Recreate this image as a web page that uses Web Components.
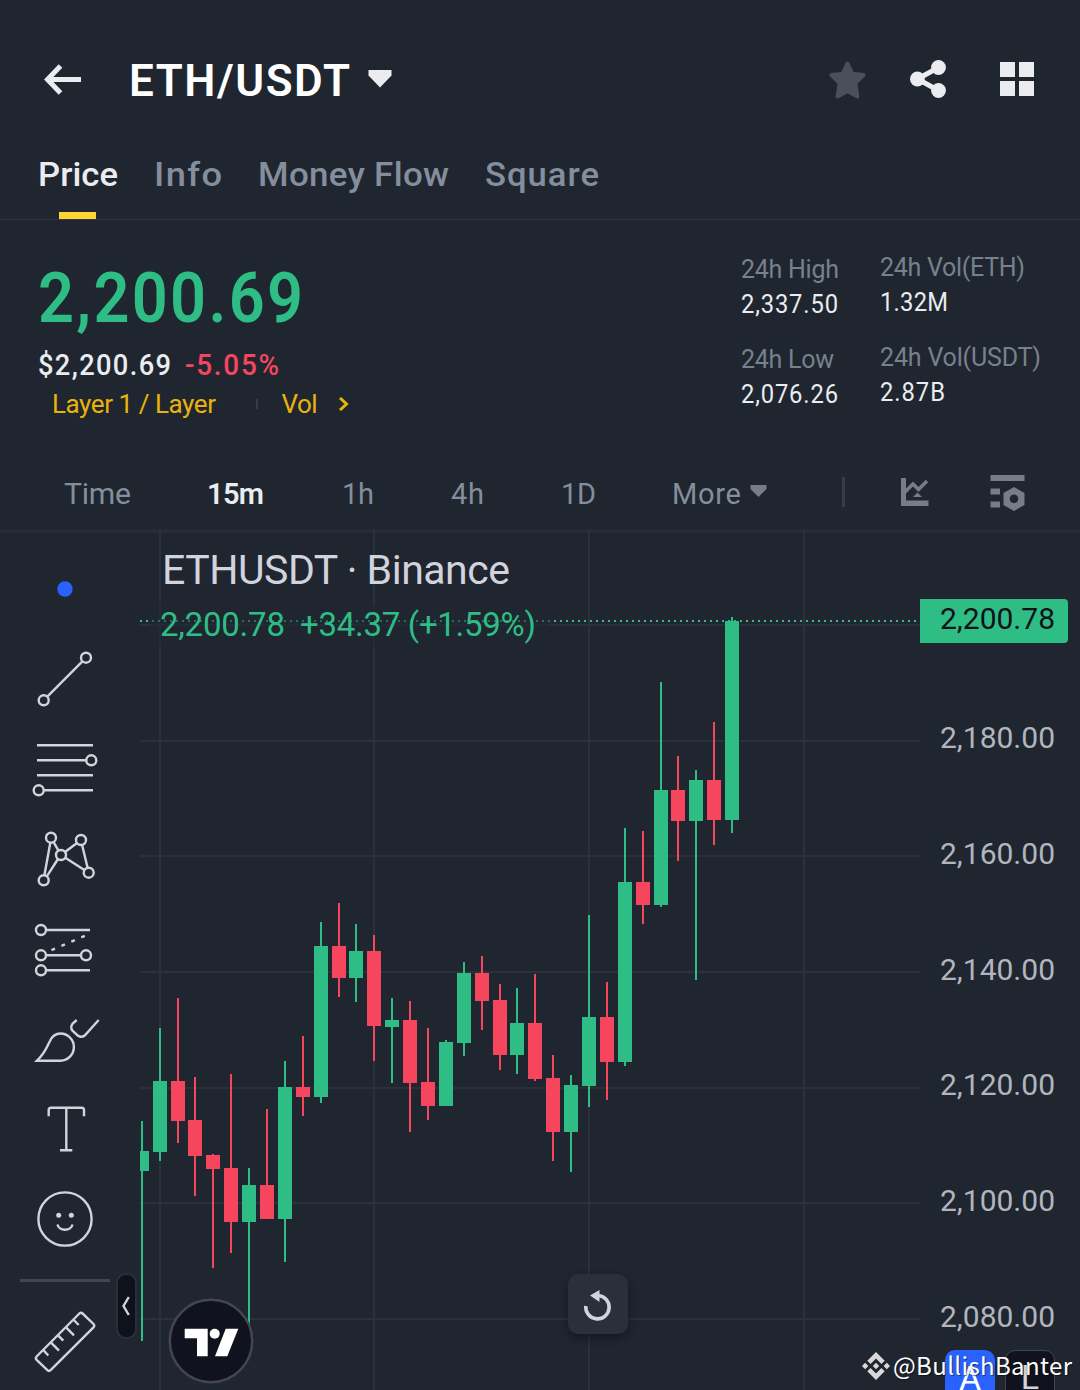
<!DOCTYPE html>
<html lang="en">
<head>
<meta charset="utf-8">
<title>ETH/USDT</title>
<style>
	html, body {
		margin: 0;
		padding: 0;
		background: #202630;
	}
	body {
		width: 1080px;
		height: 1390px;
		overflow: hidden;
		font-family: Roboto, "Liberation Sans", sans-serif;
		color: #eaecef;
	}
</style>
</head>
<body>

<trade-screen></trade-screen>

<template id="trade-screen">
	<style>
		:host {
			display: flex;
			flex-direction: column;
			position: relative;
			width: 1080px;
			height: 1390px;
			overflow: hidden;
		}
	</style>
	<pair-header></pair-header>
	<page-tabs></page-tabs>
	<price-summary></price-summary>
	<interval-bar></interval-bar>
	<chart-panel></chart-panel>
	<user-watermark>@BullishBanter</user-watermark>
</template>

<template id="pair-header">
	<style>
		:host {
			display: flex;
			align-items: center;
			height: 160px;
			box-sizing: border-box;
			padding: 0 46px 2px 44px;
		}
		.title {
			margin: 4px 0 0 48px;
			font-size: 44px;
			font-weight: 600;
			line-height: 60px;
			color: #fff;
		}
		.caret {
			margin: -1px auto 0 18px;
		}
		.star { margin: 2px 44px 0 0; }
		.share { margin-right: 54px; }
		svg { display: block; }
	</style>
	<svg width="37" height="31" viewBox="0 0 37 31" fill="none" stroke="#eaecef" stroke-width="5"><path d="M3 15.500H37M16.500 2L3.500 15.500l13 13.500"/></svg>
	<text-run class="title" width="221">ETH/USDT</text-run>
	<svg class="caret" width="24" height="18" viewBox="0 0 24 18" fill="#eaecef"><path d="M.5 0h23v5.500L12 17.500.5 5.500z"/></svg>
	<svg class="star" width="37" height="38" viewBox="0 0 37 38" fill="#4a4f5a" stroke="#4a4f5a" stroke-width="4" stroke-linejoin="round"><path d="M18.500 2.500l4.700 10.200 11.300 1.300-8.100 8 2 13.500-9.900-5.600-9.900 5.600 2-13.500-8.100-8 11.300-1.300z"/></svg>
	<svg class="share" width="36" height="38" viewBox="0 0 36 38" fill="#eaecef"><path d="M28.500 7.500L7.500 19l21 11.500" fill="none" stroke="#eaecef" stroke-width="5"/><circle cx="7.400" cy="19" r="7.400"/><circle cx="28.500" cy="7.500" r="7.400"/><circle cx="28.500" cy="30.500" r="7.400"/></svg>
	<svg width="34" height="34" viewBox="0 0 34 34" fill="#eaecef"><path d="M0 0h15v15H0zM19 0h15v15H19zM0 19h15v15H0zM19 19h15v15H19z"/></svg>
</template>

<template id="page-tabs">
	<style>
		:host {
			display: flex;
			gap: 36px;
			height: 60px;
			box-sizing: border-box;
			padding-left: 38px;
			border-bottom: 1px solid #323842;
			font-size: 33px;
			font-weight: 500;
			line-height: 29px;
			color: #848e9c;
		}
		.tab {
			display: flex;
			flex-direction: column;
			align-items: center;
			justify-content: space-between;
		}
		.active { color: #eaecef; }
		.active::after {
			content: '';
			width: 37px;
			height: 7.500px;
			background: #fcd535;
		}
	</style>
	<div class="tab active"><text-run width="80" stretch="1.05">Price</text-run></div>
	<div class="tab"><text-run width="68" stretch="1.1">Info</text-run></div>
	<div class="tab"><text-run width="191" stretch="1.06">Money Flow</text-run></div>
	<div class="tab"><text-run width="114" stretch="1.05">Square</text-run></div>
</template>

<template id="price-summary">
	<style>
		:host {
			display: flex;
			justify-content: space-between;
			height: 237px;
			box-sizing: border-box;
			padding: 32px 37px 0 38px;
		}
		.last {
			font-size: 70px;
			font-weight: 600;
			line-height: 92px;
			color: #2ebd85;
		}
		.fiat {
			display: flex;
			gap: 14px;
			margin-top: -1px;
			font-size: 29px;
			font-weight: 500;
			line-height: 44px;
		}
		.down { color: #f6465d; }
		.tags {
			display: flex;
			align-items: center;
			margin-top: -1px;
			padding-left: 14px;
			font-size: 26px;
			line-height: 36px;
			color: #e9b30c;
		}
		.tags i {
			width: 2.500px;
			height: 10px;
			margin: 0 23px 0 40px;
			background: #363c48;
		}
		.tags svg { margin-left: 22px; }
		.stats {
			display: grid;
			grid-template-columns: 139px 163px;
			grid-auto-rows: 90px;
		}
		stat-cell:nth-child(even) { margin-top: -2px; }
	</style>
	<div>
		<text-run class="last" width="265" stretch=".9">2,200.69</text-run>
		<div class="fiat">
			<text-run width="133" stretch=".94">$2,200.69</text-run>
			<text-run class="down" width="94" stretch=".96">-5.05%</text-run>
		</div>
		<div class="tags">
			<text-run width="164">Layer 1 / Layer</text-run>
			<i></i>
			<text-run width="36">Vol</text-run>
			<svg width="10" height="14" viewBox="0 0 10 14" fill="none" stroke="#e9b30c" stroke-width="3"><path d="M1 1l6.500 6L1 13"/></svg>
		</div>
	</div>
	<div class="stats">
		<stat-cell label="24h High" lw="98" vw="97">2,337.50</stat-cell>
		<stat-cell label="24h Vol(ETH)" lw="145" vw="68">1.32M</stat-cell>
		<stat-cell label="24h Low" lw="93" vw="97">2,076.26</stat-cell>
		<stat-cell label="24h Vol(USDT)" lw="161" vw="65">2.87B</stat-cell>
	</div>
</template>

<template id="interval-bar">
	<style>
		:host {
			display: flex;
			align-items: center;
			height: 72px;
			box-sizing: border-box;
			padding: 2px 54px 0 64px;
			font-size: 29px;
			line-height: 40px;
			color: #848e9c;
		}
		.active {
			font-weight: 600;
			color: #eaecef;
		}
		i {
			width: 3px;
			height: 30px;
			margin: -4px 56px 0 75px;
			background: #363c48;
		}
		svg { margin-top: -4px; }
		.caret { margin: -6px 0 0 9px; }
		.settings { margin: -3px 0 0 auto; }
	</style>
	<text-run width="67" stretch="1.04">Time</text-run>
	<text-run class="active" width="57" style="margin-left: 76px">15m</text-run>
	<text-run width="32" style="margin-left: 78px">1h</text-run>
	<text-run width="33" style="margin-left: 77px">4h</text-run>
	<text-run width="35" style="margin-left: 77px">1D</text-run>
	<text-run width="69" style="margin-left: 76px">More</text-run>
	<svg class="caret" width="17" height="12" viewBox="0 0 17 12" fill="#777d88"><path d="M.5 0h16v4L8.500 12 .5 4z"/></svg>
	<i></i>
	<svg width="28" height="28" viewBox="0 0 28 28" fill="#777d88"><path d="M0 0h5v22.500h22.500V28H0z"/><path d="M4 14l8-8 5.500 5.500L26 3" fill="none" stroke="#777d88" stroke-width="3.500"/><path d="M16.500 14.500l4.500 4.500h-9z"/></svg>
	<svg class="settings" width="36" height="38" viewBox="0 0 36 38" fill="#777d88"><path d="M.500 1h34v6H.500zM.500 14.500H10v6H.500zM.500 27.500H10v6H.500z"/><path fill-rule="evenodd" d="M24 13L34.500 19v12L24 37 13.500 31V19zm0 7.500a4.300 4.300 0 1 0 .01 0z"/></svg>
</template>

<template id="chart-panel">
	<style>
		:host {
			display: grid;
			grid-template-columns: 140px 780px 160px;
			position: relative;
			height: 861px;
			background: linear-gradient(#262c36, #262c36) top / 100% 4px no-repeat;
		}
		.legend {
			position: absolute;
			left: 150px;
			top: 17px;
			padding-left: 12px;
			width: 400px;
			box-sizing: border-box;
		}
		.name {
			font-size: 41px;
			line-height: 48px;
			color: #d1d4dc;
		}
		.quote {
			display: flex;
			gap: 15px;
			margin-top: 9px;
			margin-left: -12px;
			padding-left: 10px;
			background: rgb(32 38 48 / 50%);
			font-size: 33px;
			line-height: 44px;
			color: #2ebd85;
		}
		.collapse {
			position: absolute;
			left: 115.500px;
			top: 744px;
			width: 21px;
			height: 66px;
			box-sizing: border-box;
			border: 2px solid #2a2f3b;
			border-radius: 10px;
			background: #0f121b;
		}
		.collapse svg { display: block; margin: 21px 0 0 4px; }
		.brand {
			position: absolute;
			left: 168.300px;
			top: 769.300px;
		}
		.reset {
			position: absolute;
			left: 568px;
			top: 745px;
			width: 60px;
			height: 60px;
			border-radius: 10px;
			background: #2a303b;
			box-shadow: 0 4px 10px rgb(10 12 18 / 55%);
		}
	</style>
	<tool-bar></tool-bar>
	<candle-plot></candle-plot>
	<price-axis></price-axis>
	<div class="legend">
		<text-run class="name" width="348">ETHUSDT · Binance</text-run>
		<div class="quote">
			<text-run width="125">2,200.78</text-run>
			<text-run width="236">+34.37 (+1.59%)</text-run>
		</div>
	</div>
	<div class="collapse"><svg width="8" height="20" viewBox="0 0 8 20" fill="none" stroke="#d1d4dc" stroke-width="2.400"><path d="M6.800 1L1.500 10l5.300 9"/></svg></div>
	<svg class="brand" width="86" height="86" viewBox="0 0 86 86" fill="#fff"><circle cx="43" cy="43" r="41.200" fill="#10131d" stroke="#434651" stroke-width="2.500"/><path d="M16.700 30.700h23v27.600H29v-18H16.700zM57.700 30.700h12.600l-11 27.600H47z"/><circle cx="46.700" cy="35.700" r="5"/></svg>
	<div class="reset"><svg width="60" height="60" viewBox="0 0 60 60"><path d="M17.800 32A11.700 11.700 0 1 0 30 21.500" fill="none" stroke="#d1d4dc" stroke-width="3.600"/><path d="M31.500 16v12L22 21.500z" fill="#d1d4dc"/></svg></div>
</template>

<template id="tool-bar">
	<style>
		:host {
			display: flex;
			flex-direction: column;
			padding: 15px 0 0 20px;
			width: 90px;
		}
		svg {
			display: block;
			flex: none;
			fill: none;
			stroke: #d1d4dc;
			stroke-width: 2.400;
		}
		hr {
			flex: none;
			width: 90px;
			height: 3px;
			margin: 15px 0;
			border: 0;
			background: #434651;
		}
	</style>
	<svg width="90" height="90"><circle cx="45" cy="45" r="7.700" fill="#2962ff" stroke="none"/></svg>
	<svg width="90" height="90"><path d="M27.300 62.700L62.400 27.300"/><circle cx="23.700" cy="66.300" r="5"/><circle cx="66" cy="23.700" r="5"/></svg>
	<svg width="90" height="90"><path d="M17 21.300h56M17 36.300h49M17 51.300h56M24 66.300h49"/><circle cx="71.300" cy="36.300" r="5"/><circle cx="18.700" cy="66.300" r="5"/></svg>
	<svg width="90" height="90"><path d="M33.600 28.200l4.900 8.400M45 38l12-9M62.100 31l5.500 22.700M45.300 43.700l19 12.200M38 45L26.800 62.300M30.300 28.700l-5.900 32.600"/><circle cx="31" cy="23.700" r="5"/><circle cx="41" cy="41" r="5"/><circle cx="61" cy="26" r="5"/><circle cx="68.700" cy="58.700" r="5"/><circle cx="23.700" cy="66.300" r="5"/></svg>
	<svg width="90" height="90"><path d="M26 26h44M26 51.300h35M26 66.300h44"/><path d="M31.500 46.100l35-15" stroke-dasharray="3.800 7"/><circle cx="21" cy="26" r="5"/><circle cx="21" cy="51.300" r="5"/><circle cx="66" cy="51.300" r="5"/><circle cx="21" cy="66.300" r="5"/></svg>
	<svg width="90" height="90"><path d="M17 66.700C26 58 27 52 30 47c2.500-5.500 6.500-7.500 10.500-7.500a13.400 13.600 0 0 1 0 27.200z"/><path d="M56.700 26l-4 3.500q-3 4 0 7.500l5 4.500q3.500 2.500 7 0L78.700 26"/></svg>
	<svg width="90" height="90"><path d="M28.700 32.300V26q0-2.300 2.300-2.300h30.700q2.300 0 2.300 2.300v6.300M46.300 23.700v42.600M40 66.300h12.300"/></svg>
	<svg width="90" height="90"><circle cx="45" cy="45" r="26.600"/><circle cx="38.700" cy="41.300" r="2.500" fill="#d1d4dc" stroke="none"/><circle cx="51.300" cy="41.300" r="2.500" fill="#d1d4dc" stroke="none"/><path d="M37.500 50.500a7.600 6.300 0 0 0 15 0"/></svg>
	<hr>
	<svg width="90" height="90" stroke-linejoin="round"><path d="M59.400 16.500q1.600-1.500 3.200 0L73.500 27q1.500 1.700 0 3.300L30.600 73.200q-1.600 1.500-3.200 0L16.600 62.800q-1.500-1.700 0-3.300z"/><path d="M23.300 53l5 5.500M31 45.700l8 8M38.300 38.700l5 5M46.300 30.700l7.700 7.600M53.700 23l5 5"/></svg>
</template>

<template id="price-axis">
	<style>
		:host {
			display: block;
			position: relative;
			padding-top: 70px;
			font-size: 30px;
			color: #b2b5be;
		}
		.current {
			width: 148px;
			height: 44px;
			margin-bottom: 37px;
			box-sizing: border-box;
			padding-left: 20px;
			border-radius: 0 4px 4px 0;
			background: #2ebd85;
			line-height: 40px;
			color: #0f1218;
		}
		.tick {
			padding-left: 20px;
			height: 115.800px;
			line-height: 115.800px;
		}
		.mode {
			position: absolute;
			top: 821px;
			width: 50px;
			height: 60px;
			box-sizing: border-box;
			border-radius: 10px;
			font-size: 34px;
			line-height: 56px;
			text-align: center;
			color: #fff;
		}
		.auto { left: 25px; background: #2962ff; }
		.log {
			left: 85px;
			border: 1.500px solid #434651;
			background: #10131d;
			line-height: 52px;
			color: #d1d4dc;
		}
	</style>
	<div class="current"><text-run width="115">2,200.78</text-run></div>
	<div class="ticks"></div>
	<div class="mode auto">A</div>
	<div class="mode log">L</div>
</template>

<script>
function stamp(el) {
	const root = el.attachShadow({mode: 'open'})
	root.appendChild(document.getElementById(el.localName).content.cloneNode(true))
	return root
}

// A run of text tracked out (or in) to the width in its attribute.
// stretch makes the letters themselves wider or narrower first.
window.customElements.define('text-run', class extends HTMLElement {
	constructor() {
		super()
		this.root = this.attachShadow({mode: 'open'})
		this.root.innerHTML = `
			<style>
				:host { display: block; white-space: nowrap; flex: none; }
				span { display: inline-block; vertical-align: top; transform-origin: left; }
			</style>
			<span><slot></slot></span>`
	}

	connectedCallback() {
		const span = this.root.querySelector('span')
		const width = parseFloat(this.getAttribute('width'))
		const stretch = parseFloat(this.getAttribute('stretch')) || 1
		const gaps = this.textContent.length - 1
		if(!width || gaps < 1) return
		const spacing = (width / stretch - span.getBoundingClientRect().width) / gaps
		span.style.letterSpacing = spacing + 'px'
		span.style.marginRight = (width - width / stretch - spacing) + 'px'
		if(stretch !== 1) span.style.transform = `scaleX(${stretch})`
	}
})

window.customElements.define('stat-cell', class extends HTMLElement {
	constructor() {
		super()
		this.attachShadow({mode: 'open'}).innerHTML = `
			<style>
				:host { display: block; font-size: 25px; line-height: 35px; color: #eaecef; }
				.label { color: #77808d; }
			</style>
			<text-run class="label" width="${this.getAttribute('lw')}">${this.getAttribute('label')}</text-run>
			<text-run width="${this.getAttribute('vw')}" stretch=".95">${this.textContent}</text-run>`
	}
})

// [left, body top, body bottom, high, low, rising]
const CANDLES = [
	[135, 1151, 1171, 1121, 1341, 1],
	[153, 1081, 1152, 1028, 1161, 1],
	[171, 1081, 1121, 998, 1143, 0],
	[188, 1120, 1156, 1077, 1196, 0],
	[206, 1155, 1169, 1154, 1268, 0],
	[224, 1168, 1222, 1074, 1253, 0],
	[242, 1185, 1222, 1168, 1330, 1],
	[260, 1185, 1219, 1109, 1219, 0],
	[278, 1087, 1219, 1061, 1262, 1],
	[296, 1087, 1097, 1036, 1116, 0],
	[314, 946, 1097, 922, 1103, 1],
	[332, 946, 978, 903, 997, 0],
	[349, 951, 978, 924, 1002, 1],
	[367, 951, 1026, 935, 1061, 0],
	[385, 1020, 1027, 998, 1083, 1],
	[403, 1020, 1083, 1001, 1132, 0],
	[421, 1082, 1106, 1028, 1120, 0],
	[439, 1042, 1106, 1040, 1106, 1],
	[457, 973, 1043, 962, 1056, 1],
	[475, 973, 1001, 956, 1030, 0],
	[493, 1000, 1055, 984, 1070, 0],
	[510, 1023, 1055, 988, 1074, 1],
	[528, 1023, 1079, 974, 1081, 0],
	[546, 1078, 1132, 1055, 1161, 0],
	[564, 1085, 1132, 1075, 1172, 1],
	[582, 1017, 1086, 915, 1107, 1],
	[600, 1017, 1062, 982, 1100, 0],
	[618, 882, 1062, 828, 1066, 1],
	[636, 882, 905, 831, 924, 0],
	[654, 790, 905, 682, 907, 1],
	[671, 790, 821, 756, 861, 0],
	[689, 780, 821, 770, 980, 1],
	[707, 780, 820, 722, 845, 0],
	[725, 621, 820, 617, 833, 1],
]

window.customElements.define('candle-plot', class extends HTMLElement {
	constructor() {
		super()
		const rows = [624, 740, 855, 971, 1087, 1202, 1318]
			.map(y => `<rect x="140" y="${y}" width="780" height="2"/>`).join('')
		const cols = [159, 373, 588, 803]
			.map(x => `<rect x="${x}" y="529" width="2" height="861"/>`).join('')
		const candles = CANDLES.map(([x, top, bottom, high, low, up]) => `
			<g fill="${up ? '#2ebd85' : '#f6465d'}">
				<rect x="${x + 6}" y="${high}" width="2" height="${low - high}"/>
				<rect x="${x}" y="${top}" width="14" height="${bottom - top}"/>
			</g>`).join('')
		this.attachShadow({mode: 'open'}).innerHTML = `
			<style>
				:host { display: block; }
				svg { display: block; }
			</style>
			<svg width="780" height="861" viewBox="140 529 780 861" shape-rendering="crispEdges">
				<g fill="#2b313b">${rows}${cols}</g>
				${candles}
				<path d="M140 621H918" stroke="#2ebd85" stroke-width="2" stroke-dasharray="2 4"/>
			</svg>`
	}
})

window.customElements.define('price-axis', class extends HTMLElement {
	constructor() {
		super()
		const root = stamp(this)
		root.querySelector('.ticks').innerHTML = [2180, 2160, 2140, 2120, 2100, 2080]
			.map(v => `<text-run class="tick" width="115">${v.toLocaleString('en-US', {minimumFractionDigits: 2})}</text-run>`)
			.join('')
	}
})

window.customElements.define('user-watermark', class extends HTMLElement {
	constructor() {
		super()
		this.attachShadow({mode: 'open'}).innerHTML = `
			<style>
				:host {
					display: flex;
					align-items: center;
					gap: 3px;
					position: absolute;
					left: 862px;
					top: 1350px;
					height: 32px;
					font: 400 24px/32px "Noto Sans CJK SC", "Noto Sans", sans-serif;
					color: #fff;
					text-shadow: 1px 1px 1px rgb(0 0 0 / 50%);
				}
				text-run { margin-top: -2px; }
			</style>
			<svg width="28" height="28" viewBox="0 0 28 28" fill="#d9d9d9"><path d="M14 0l8.700 8.700-3.300 3.300L14 6.600 8.600 12 5.300 8.700zM14 28l8.700-8.700-3.300-3.300L14 21.400 8.600 16l-3.300 3.300zM14 10.800l3.200 3.200-3.200 3.200-3.200-3.200zM3.200 10.800L6.400 14l-3.200 3.200L0 14zM24.800 10.800L28 14l-3.200 3.200-3.200-3.200z"/></svg>
			<text-run width="179">${this.textContent}</text-run>`
	}
})

for(const name of ['pair-header', 'page-tabs', 'price-summary', 'interval-bar', 'tool-bar', 'chart-panel', 'trade-screen']) {
	window.customElements.define(name, class extends HTMLElement {
		constructor() {
			super()
			stamp(this)
		}
	})
}
</script>
</body>
</html>
